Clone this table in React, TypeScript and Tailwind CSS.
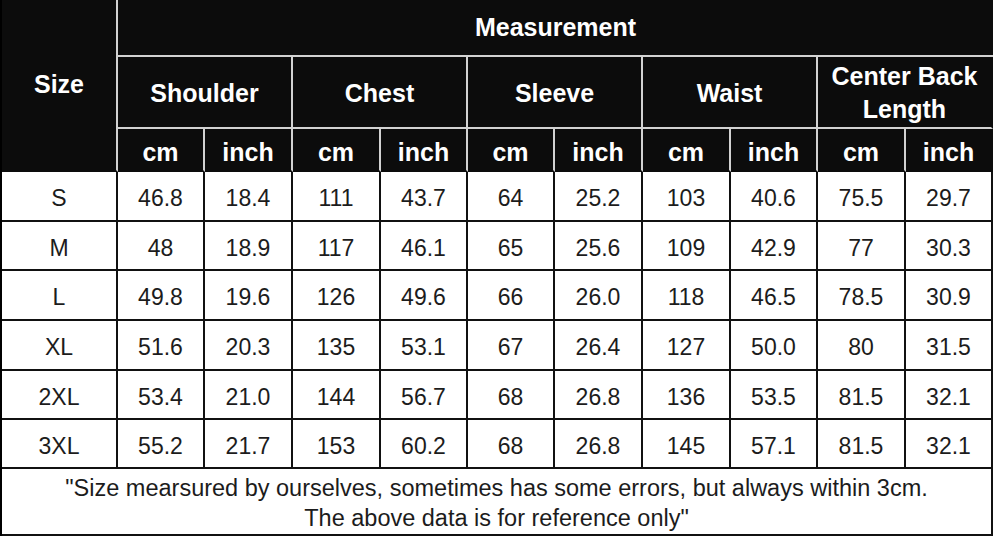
import React from 'react';

const groups = ['Shoulder', 'Chest', 'Sleeve', 'Waist', 'Center Back Length'];

const rows = [
  ['S', '46.8', '18.4', '111', '43.7', '64', '25.2', '103', '40.6', '75.5', '29.7'],
  ['M', '48', '18.9', '117', '46.1', '65', '25.6', '109', '42.9', '77', '30.3'],
  ['L', '49.8', '19.6', '126', '49.6', '66', '26.0', '118', '46.5', '78.5', '30.9'],
  ['XL', '51.6', '20.3', '135', '53.1', '67', '26.4', '127', '50.0', '80', '31.5'],
  ['2XL', '53.4', '21.0', '144', '56.7', '68', '26.8', '136', '53.5', '81.5', '32.1'],
  ['3XL', '55.2', '21.7', '153', '60.2', '68', '26.8', '145', '57.1', '81.5', '32.1'],
];

const units = ['cm', 'inch', 'cm', 'inch', 'cm', 'inch', 'cm', 'inch', 'cm', 'inch'];

export default function App() {
  return (
    <div className="w-[1000px] h-[540px] bg-white font-['Liberation_Sans',Arial,sans-serif]">
      <div className="grid w-[993px] border-l-2 border-black grid-cols-[116px_87px_88px_88px_87px_87px_88px_88px_87px_88px_87px] grid-rows-[57px_72px_43px_50px_49px_50px_50px_49px_49px_67px]">
        {/* header */}
        <div className="row-span-3 flex items-center justify-center bg-[#0c0c0c] border-r-2 border-r-[#d2d2d2] border-b-2 border-b-[#0c0c0c] text-white font-bold text-[25px]">
          Size
        </div>
        <div className="col-span-10 flex items-center justify-center bg-[#0c0c0c] border-b-2 border-[#d2d2d2] text-white font-bold text-[25px]">
          Measurement
        </div>
        {groups.map((g, i) => (
          <div
            key={g}
            className={
              'col-span-2 flex items-center justify-center text-center bg-[#0c0c0c] border-b-2 border-b-[#d2d2d2] border-r-2 text-white font-bold text-[25px] leading-[33px] px-1 pt-0.5 ' +
              (i === groups.length - 1 ? 'border-r-[#0c0c0c]' : 'border-r-[#d2d2d2]')
            }
          >
            {g}
          </div>
        ))}
        {units.map((u, i) => (
          <div
            key={i}
            className={
              'flex items-center justify-center bg-[#0c0c0c] border-b-2 border-b-[#0c0c0c] border-r-2 text-white font-bold text-[25px] pt-1.5 ' +
              (i === units.length - 1 ? 'border-r-[#0c0c0c]' : 'border-r-[#d2d2d2]')
            }
          >
            {u}
          </div>
        ))}

        {/* data */}
        {rows.map((r) =>
          r.map((v, j) => (
            <div
              key={r[0] + j}
              className="flex items-center justify-center border-r-2 border-b-2 border-[#111] text-[#1c1c1c] text-[23px] pt-[5px]"
            >
              {v}
            </div>
          ))
        )}

        {/* footer */}
        <div className="col-span-11 flex flex-col items-center justify-center border-r-2 border-b-2 border-[#111] text-[#1c1c1c] text-[23.5px] leading-[30px] pt-[3px]">
          <span>"Size mearsured by ourselves, sometimes has some errors, but always within 3cm.</span>
          <span>The above data is for reference only"</span>
        </div>
      </div>
    </div>
  );
}
